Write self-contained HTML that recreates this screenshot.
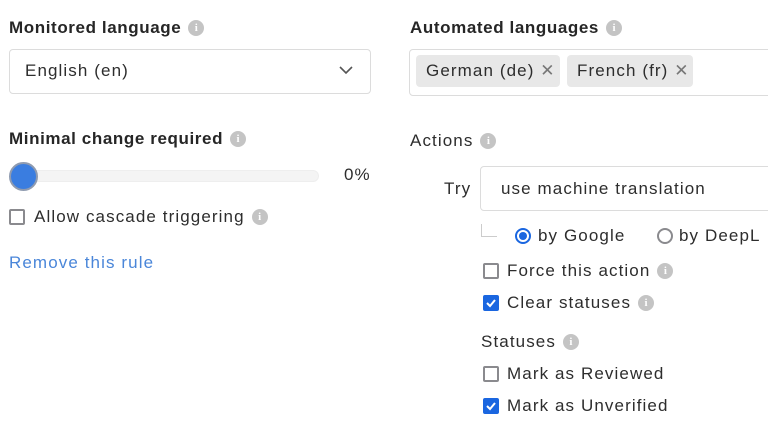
<!DOCTYPE html>
<html><head><style>
*{margin:0;padding:0;box-sizing:border-box}
body{width:768px;height:427px;background:#fff;font-family:"Liberation Sans",sans-serif;color:#2d2d2d;font-size:17px;position:relative;overflow:hidden;letter-spacing:1.1px}
.a{position:absolute;white-space:nowrap;line-height:20px}
.b{font-weight:bold;font-size:17px;letter-spacing:0.6px;color:#262626}
.i{display:inline-block;vertical-align:top;margin-top:2px;margin-left:7px;width:16px;height:16px;border-radius:50%;background:#c4c4c4;color:#fff;font-size:11px;font-weight:bold;text-align:center;line-height:16px;font-family:"Liberation Serif",serif;letter-spacing:0}
.box{position:absolute;border:1px solid #dcdcdc;border-radius:4px;background:#fff}
.cb{position:absolute;width:16px;height:16px;border:2px solid #8a8a8e;border-radius:2px;background:#fff}
.cb.on{background:#1a66e0;border-color:#1a66e0}
.tag{position:absolute;background:#e8e8e8;border-radius:4px;height:32px;line-height:32px;padding-left:10px;font-size:17px}
.rad{position:absolute;width:16px;height:16px;border-radius:50%;border:2px solid #8a8a8e}
</style></head><body>
<div class="a b" style="left:9px;top:18px">Monitored language<span class="i">i</span></div>
<div class="box" style="left:9px;top:49px;width:362px;height:45px"></div>
<div class="a" style="left:25px;top:61px">English (en)</div>
<svg style="position:absolute;left:339px;top:66px" width="14" height="9"><path d="M1 1 L7 7 L13 1" stroke="#555" stroke-width="1.6" fill="none"/></svg>

<div class="a b" style="left:9px;top:129px">Minimal change required<span class="i">i</span></div>
<div style="position:absolute;left:12px;top:170px;width:307px;height:12px;background:#f4f4f4;border-radius:6px;border:1px solid #eee"></div>
<div style="position:absolute;left:9px;top:162px;width:29px;height:29px;border-radius:50%;background:#3a7de0;border:2px solid #8f9bb0"></div>
<div class="a" style="left:344px;top:165px">0%</div>

<div class="cb" style="left:9px;top:209px"></div>
<div class="a" style="left:34px;top:207px">Allow cascade triggering<span class="i">i</span></div>
<div class="a" style="left:9px;top:253px;color:#4a86d9">Remove this rule</div>

<div class="a b" style="left:410px;top:18px">Automated languages<span class="i">i</span></div>
<div class="box" style="left:409px;top:49px;width:370px;height:47px"></div>
<div class="tag" style="left:416px;top:55px;width:144px">German (de) <span style="color:#777">✕</span></div>
<div class="tag" style="left:567px;top:55px;width:126px">French (fr) <span style="color:#777">✕</span></div>

<div class="a" style="left:410px;top:131px">Actions<span class="i">i</span></div>
<div class="a" style="left:444px;top:179px">Try</div>
<div class="box" style="left:480px;top:166px;width:300px;height:45px"></div>
<div class="a" style="left:501px;top:179px">use machine translation</div>
<div style="position:absolute;left:481px;top:224px;width:16px;height:13px;border-left:1px solid #ccc;border-bottom:1px solid #ccc"></div>
<div class="rad" style="left:515px;top:228px;border-color:#1a66e0"><div style="position:absolute;left:2px;top:2px;width:8px;height:8px;border-radius:50%;background:#1a66e0"></div></div>
<div class="a" style="left:538px;top:226px">by Google</div>
<div class="rad" style="left:657px;top:228px"></div>
<div class="a" style="left:679px;top:226px">by DeepL</div>

<div class="cb" style="left:483px;top:263px"></div><div class="a" style="left:507px;top:261px">Force this action<span class="i">i</span></div>
<div class="cb on" style="left:483px;top:295px"><svg style="position:absolute;left:0;top:0" width="12" height="12"><path d="M2 6 L5 9 L10 3" stroke="#fff" stroke-width="2" fill="none"/></svg></div><div class="a" style="left:507px;top:293px">Clear statuses<span class="i">i</span></div>
<div class="a" style="left:481px;top:332px">Statuses<span class="i">i</span></div>
<div class="cb" style="left:483px;top:366px"></div><div class="a" style="left:507px;top:364px">Mark as Reviewed</div>
<div class="cb on" style="left:483px;top:398px"><svg style="position:absolute;left:0;top:0" width="12" height="12"><path d="M2 6 L5 9 L10 3" stroke="#fff" stroke-width="2" fill="none"/></svg></div><div class="a" style="left:507px;top:396px">Mark as Unverified</div>
</body></html>
